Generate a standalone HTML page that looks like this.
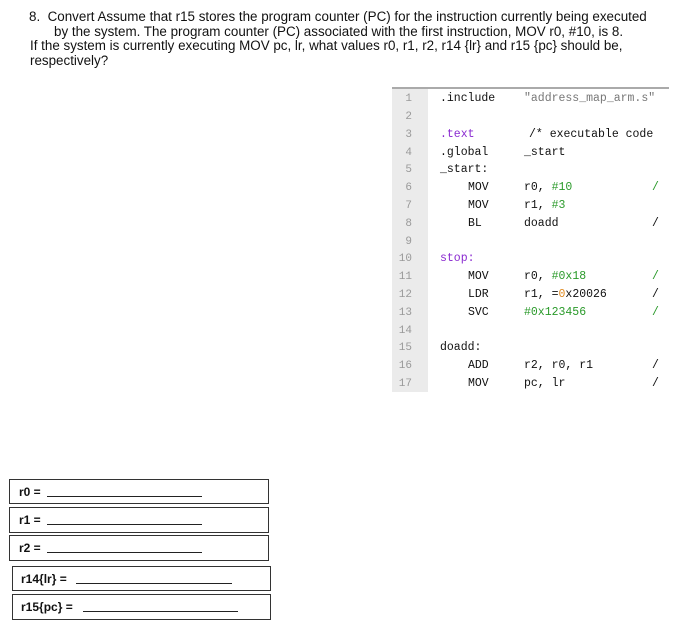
<!DOCTYPE html>
<html><head><meta charset="utf-8"><style>
body{margin:0;width:689px;height:624px;background:#fff;position:relative;overflow:hidden;font-family:"Liberation Sans",Arial,sans-serif;}
.q{position:absolute;left:29px;top:10px;font-size:13.4px;line-height:14.7px;color:#111;white-space:nowrap;}
.panel{position:absolute;left:392px;top:87px;width:277px;height:303px;border-top:2px solid #aaa;}
.gut{position:absolute;left:0;top:0;width:36px;height:303px;background:#ebebeb;}
.ln{position:absolute;left:0;width:20px;text-align:right;font-family:"Liberation Mono",monospace;font-size:11px;color:#999;}
.c{position:absolute;font-family:"Liberation Mono","Courier New",monospace;font-size:11.5px;color:#111;white-space:pre;}
.g{color:#2a9a2a}.p{color:#8a2ad0}.o{color:#e08a20}.s{color:#777}
.box{position:absolute;border:1px solid #333;font-weight:bold;font-size:12px;color:#111;box-sizing:border-box;}
.box span{position:absolute;top:5px;}
.box i{position:absolute;border-bottom:1px solid #222;height:0;top:16px;}
</style></head><body>
<div class="q">8.&nbsp; Convert Assume that r15 stores the program counter (PC) for the instruction currently being executed</div>
<div class="q" style="left:54px;top:24.7px">by the system. The program counter (PC) associated with the first instruction, MOV r0, #10, is 8.</div>
<div class="q" style="left:30px;top:39.4px">If the system is currently executing MOV pc, lr, what values r0, r1, r2, r14 {lr} and r15 {pc} should be,<br>respectively?</div>
<div class="panel"><div class="gut"></div>
<div class="ln" style="top:4px">1</div><div class="ln" style="top:22px">2</div><div class="ln" style="top:40px">3</div><div class="ln" style="top:58px">4</div><div class="ln" style="top:75px">5</div><div class="ln" style="top:93px">6</div><div class="ln" style="top:111px">7</div><div class="ln" style="top:129px">8</div><div class="ln" style="top:147px">9</div><div class="ln" style="top:164px">10</div><div class="ln" style="top:182px">11</div><div class="ln" style="top:200px">12</div><div class="ln" style="top:218px">13</div><div class="ln" style="top:236px">14</div><div class="ln" style="top:253px">15</div><div class="ln" style="top:271px">16</div><div class="ln" style="top:289px">17</div>
<div class="c" style="left:48px;top:3px">.include</div><div class="c s" style="left:132px;top:3px">"address_map_arm.s"</div>
<div class="c p" style="left:48px;top:39px">.text</div><div class="c" style="left:137px;top:39px">/* executable code</div>
<div class="c" style="left:48px;top:57px">.global</div><div class="c" style="left:132px;top:57px">_start</div>
<div class="c" style="left:48px;top:74px">_start:</div>
<div class="c" style="left:76px;top:92px">MOV</div><div class="c" style="left:132px;top:92px">r0, <span class="g">#10</span></div><div class="c g" style="left:260px;top:92px">/</div>
<div class="c" style="left:76px;top:110px">MOV</div><div class="c" style="left:132px;top:110px">r1, <span class="g">#3</span></div>
<div class="c" style="left:76px;top:128px">BL</div><div class="c" style="left:132px;top:128px">doadd</div><div class="c" style="left:260px;top:128px">/</div>
<div class="c p" style="left:48px;top:163px">stop:</div>
<div class="c" style="left:76px;top:181px">MOV</div><div class="c" style="left:132px;top:181px">r0, <span class="g">#0x18</span></div><div class="c g" style="left:260px;top:181px">/</div>
<div class="c" style="left:76px;top:199px">LDR</div><div class="c" style="left:132px;top:199px">r1, =<span class="o">0</span>x20026</div><div class="c" style="left:260px;top:199px">/</div>
<div class="c" style="left:76px;top:217px">SVC</div><div class="c g" style="left:132px;top:217px">#0x123456</div><div class="c g" style="left:260px;top:217px">/</div>
<div class="c" style="left:48px;top:252px">doadd:</div>
<div class="c" style="left:76px;top:270px">ADD</div><div class="c" style="left:132px;top:270px">r2, r0, r1</div><div class="c" style="left:260px;top:270px">/</div>
<div class="c" style="left:76px;top:288px">MOV</div><div class="c" style="left:132px;top:288px">pc, lr</div><div class="c" style="left:260px;top:288px">/</div>
</div>
<div class="box" style="left:9px;top:479px;width:260px;height:25px"><span style="left:9px">r0 =</span><i style="left:37px;width:155px"></i></div>
<div class="box" style="left:9px;top:507px;width:260px;height:26px"><span style="left:9px">r1 =</span><i style="left:37px;width:155px"></i></div>
<div class="box" style="left:9px;top:535px;width:260px;height:26px"><span style="left:9px">r2 =</span><i style="left:37px;width:155px"></i></div>
<div class="box" style="left:12px;top:566px;width:259px;height:25px"><span style="left:8px">r14{lr} =</span><i style="left:63px;width:156px"></i></div>
<div class="box" style="left:12px;top:594px;width:259px;height:26px"><span style="left:8px">r15{pc} =</span><i style="left:70px;width:155px"></i></div>
</body></html>
